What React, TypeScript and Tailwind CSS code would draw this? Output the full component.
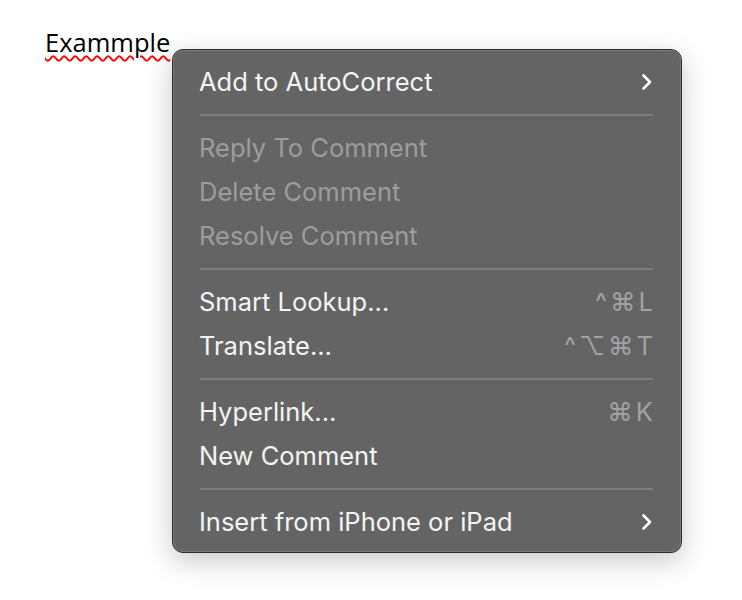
import React from "react";

function Chevron() {
  return (
    <svg width="12" height="18" viewBox="0 0 12 18" fill="none">
      <path d="M2.5 2.5 L9 9 L2.5 15.5" stroke="#ffffff" strokeWidth="2.6" strokeLinecap="round" strokeLinejoin="round" />
    </svg>
  );
}

function Item({ label, disabled, shortcut, sub }: { label: string; disabled?: boolean; shortcut?: string; sub?: boolean }) {
  return (
    <div className="flex h-[44px] items-center justify-between">
      <span className={disabled ? "text-[#9d9d9d]" : "text-[#f4f4f4]"}>{label}</span>
      {shortcut && <span className="tracking-[3px] text-[#a2a2a2] mr-[-3px]">{shortcut}</span>}
      {sub && (
        <span className="mr-[0px]">
          <Chevron />
        </span>
      )}
    </div>
  );
}

function Sep() {
  return (
    <div className="flex h-[22px] items-center pl-[1px]">
      <div className="h-[2px] w-full bg-[#7e7e7e]" />
    </div>
  );
}

export default function App() {
  return (
    <div className="relative h-[600px] w-[742px] bg-white overflow-hidden">
      <div className="pl-[45px] pt-[23px]">
        <span
          className="text-[25.5px] text-black underline decoration-wavy decoration-[#ff0000] decoration-[1.5px] underline-offset-[3px]"
          style={{ fontFamily: '"Open Sans", sans-serif' }}
        >
          Exammple
        </span>
      </div>
      <div
        className="absolute left-[172px] top-[49px] w-[510px] h-[504px] rounded-[11px] border border-[#2c2c2c] bg-[#646464] shadow-[0_8px_28px_rgba(0,0,0,0.22)]"
        style={{ fontFamily: "Inter, sans-serif" }}
      >
        <div className="h-full rounded-[10px] border border-[#7a7a7a] pl-[25px] pr-[27px] pt-[9px] text-[25.5px]">
          <Item label="Add to AutoCorrect" sub />
          <Sep />
          <Item label="Reply To Comment" disabled />
          <Item label="Delete Comment" disabled />
          <Item label="Resolve Comment" disabled />
          <Sep />
          <Item label="Smart Lookup..." shortcut="^⌘L" />
          <Item label="Translate..." shortcut="^⌥⌘T" />
          <Sep />
          <Item label="Hyperlink..." shortcut="⌘K" />
          <Item label="New Comment" />
          <Sep />
          <Item label="Insert from iPhone or iPad" sub />
        </div>
      </div>
    </div>
  );
}
